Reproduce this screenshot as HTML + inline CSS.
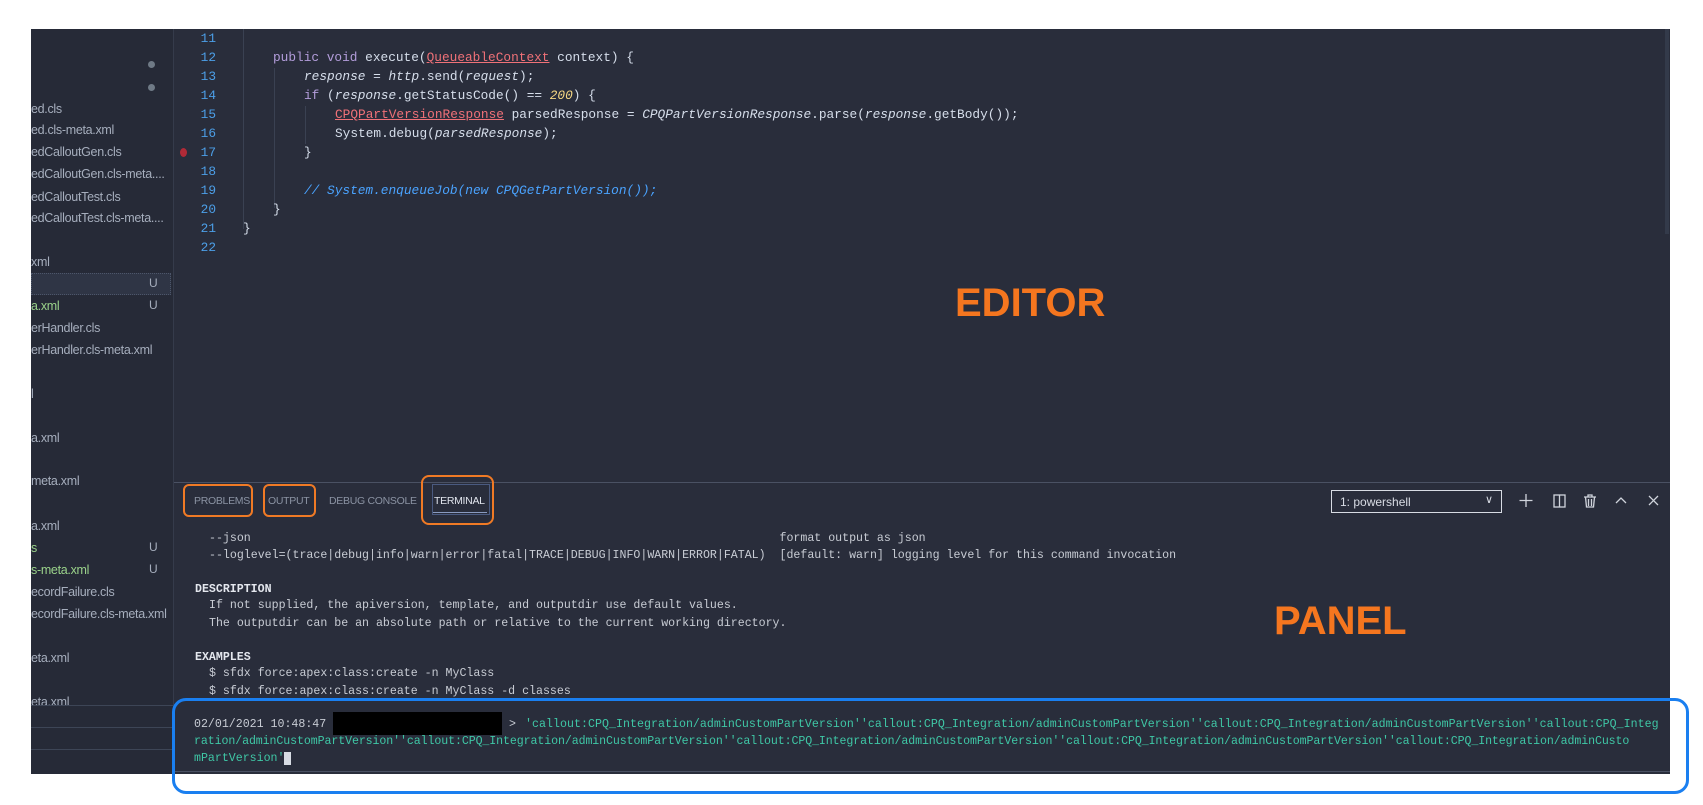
<!DOCTYPE html>
<html><head><meta charset="utf-8"><style>
*{margin:0;padding:0;box-sizing:border-box}
body{width:1703px;height:805px;background:#fff;position:relative;overflow:hidden;font-family:"Liberation Sans",sans-serif}
.abs{position:absolute;white-space:pre}
#app{position:absolute;left:31px;top:29px;width:1639px;height:745px;background:#292d3b}
#side{position:absolute;left:31px;top:29px;width:143px;height:745px;background:#262a37;border-right:1px solid #353b4b;overflow:hidden}
.si{position:absolute;left:0;font-size:12.5px;color:#a6aebd;letter-spacing:-0.3px;line-height:16px}
.g{color:#9ad28a}
.u{position:absolute;left:118px;font-size:12px;color:#a6aebd}
.ln{position:absolute;left:190px;width:26px;text-align:right;font-family:"Liberation Mono",monospace;font-size:12.8px;color:#4c9fe8;line-height:16px}
.cd{position:absolute;font-family:"Liberation Mono",monospace;font-size:12.8px;color:#d6deeb;white-space:pre;line-height:16px}
.kw{color:#b39ddb}.ty{color:#f07178;text-decoration:underline;text-decoration-color:#f07178}.it{font-style:italic}.num{color:#f7d883;font-style:italic}.cm{color:#4aa3ff;font-style:italic}
.t{position:absolute;font-family:"Liberation Mono",monospace;font-size:11.6px;color:#c8ccd4;white-space:pre;line-height:15px}
.gr{color:#3fc7a6}
.tab{position:absolute;top:495px;font-size:10.5px;color:#8b93a3;letter-spacing:-0.3px}
.ob{position:absolute;border:2px solid #f07a25;border-radius:6px}
.lbl{position:absolute;color:#f5761f;font-weight:bold;font-family:"Liberation Sans",sans-serif}
</style></head><body>
<div id="app"></div>
<div id="side">
<div class="abs" style="left:117px;top:32px;width:7px;height:7px;border-radius:50%;background:#6f7a86"></div>
<div class="abs" style="left:117px;top:55px;width:7px;height:7px;border-radius:50%;background:#6f7a86"></div>
<div class="si" style="top:72px">ed.cls</div>
<div class="si" style="top:93px">ed.cls-meta.xml</div>
<div class="si" style="top:115px">edCalloutGen.cls</div>
<div class="si" style="top:137px">edCalloutGen.cls-meta....</div>
<div class="si" style="top:160px">edCalloutTest.cls</div>
<div class="si" style="top:181px">edCalloutTest.cls-meta....</div>
<div class="si" style="top:225px">xml</div>
<div class="abs" style="left:0;top:244px;width:140px;height:22px;background:#2f3545;border:1px dotted #4d566a"></div>
<div class="u" style="top:247px">U</div>
<div class="si g" style="top:269px">a.xml</div><div class="u" style="top:269px">U</div>
<div class="si" style="top:291px">erHandler.cls</div>
<div class="si" style="top:313px">erHandler.cls-meta.xml</div>
<div class="si" style="top:357px">l</div>
<div class="si" style="top:401px">a.xml</div>
<div class="si" style="top:444px">meta.xml</div>
<div class="si" style="top:489px">a.xml</div>
<div class="si g" style="top:511px">s</div><div class="u" style="top:511px">U</div>
<div class="si g" style="top:533px">s-meta.xml</div><div class="u" style="top:533px">U</div>
<div class="si" style="top:555px">ecordFailure.cls</div>
<div class="si" style="top:577px">ecordFailure.cls-meta.xml</div>
<div class="si" style="top:621px">eta.xml</div>
<div class="si" style="top:665px">eta.xml</div>
<div class="abs" style="left:0;top:676px;width:143px;height:69px;background:#262a37;border-top:1px solid #3d4556"></div>
<div class="abs" style="left:0;top:698px;width:143px;border-top:1px solid #3d4556"></div>
<div class="abs" style="left:0;top:720px;width:143px;border-top:1px solid #3d4556"></div>
</div>
<div class="abs" style="left:1665px;top:29px;width:4px;height:205px;background:#333a4a"></div>
<div class="abs" style="left:180px;top:148px;width:7px;height:9px;border-radius:50%;background:#b02a37"></div>
<div class="ln" style="top:31px">11</div>
<div class="ln" style="top:50px">12</div>
<div class="ln" style="top:69px">13</div>
<div class="ln" style="top:88px">14</div>
<div class="ln" style="top:107px">15</div>
<div class="ln" style="top:126px">16</div>
<div class="ln" style="top:145px">17</div>
<div class="ln" style="top:164px">18</div>
<div class="ln" style="top:183px">19</div>
<div class="ln" style="top:202px">20</div>
<div class="ln" style="top:221px">21</div>
<div class="ln" style="top:240px">22</div>
<div class="abs" style="left:243px;top:29px;width:1px;height:200px;background:#3a4152"></div>
<div class="abs" style="left:274px;top:68px;width:1px;height:140px;background:#3a4152"></div>
<div class="abs" style="left:305px;top:106px;width:1px;height:38px;background:#3a4152"></div>
<div class="cd" style="left:273px;top:50px"><span class="kw">public void</span> execute(<span class="ty">QueueableContext</span> context) {</div>
<div class="cd" style="left:304px;top:69px"><span class="it">response</span> = <span class="it">http</span>.send(<span class="it">request</span>);</div>
<div class="cd" style="left:304px;top:88px"><span class="kw">if</span> (<span class="it">response</span>.getStatusCode() == <span class="num">200</span>) {</div>
<div class="cd" style="left:335px;top:107px"><span class="ty">CPQPartVersionResponse</span> parsedResponse = <span class="it">CPQPartVersionResponse</span>.parse(<span class="it">response</span>.getBody());</div>
<div class="cd" style="left:335px;top:126px">System.debug(<span class="it">parsedResponse</span>);</div>
<div class="cd" style="left:304px;top:145px">}</div>
<div class="cd cm" style="left:304px;top:183px">// System.enqueueJob(new CPQGetPartVersion());</div>
<div class="cd" style="left:273px;top:202px">}</div>
<div class="cd" style="left:243px;top:221px">}</div>
<div class="lbl" style="left:955px;top:281px;font-size:40px">EDITOR</div>
<div class="abs" style="left:174px;top:482px;width:1496px;border-top:1px solid #4a5163"></div>
<div class="tab" style="left:194px">PROBLEMS</div>
<div class="tab" style="left:268px">OUTPUT</div>
<div class="tab" style="left:329px">DEBUG CONSOLE</div>
<div class="tab" style="left:434px;color:#e0e4ec">TERMINAL</div>
<div class="abs" style="left:433px;top:512px;width:54px;border-top:1px solid #8a9bc0"></div>
<div class="abs" style="left:432px;top:484px;width:58px;height:31px;border:1px solid #4a5a80"></div>
<div class="ob" style="left:183px;top:484px;width:70px;height:33px"></div>
<div class="ob" style="left:263px;top:484px;width:53px;height:33px"></div>
<div class="ob" style="left:421px;top:475px;width:73px;height:50px;border-radius:8px"></div>
<div class="abs" style="left:1331px;top:490px;width:171px;height:23px;border:1px solid #d8dce4;background:#292d3b;color:#d8dce4;font-size:12px;padding:4px 0 0 8px">1: powershell<span style="position:absolute;right:8px;top:2px;font-size:11px">&#x2228;</span></div>
<svg class="abs" style="left:1518px;top:493px" width="150" height="16" viewBox="0 0 150 16" fill="none" stroke="#d0d4dc" stroke-width="1.3">
<path d="M8 1v13M1.5 7.5h13"/>
<rect x="36" y="2" width="11" height="12"/><path d="M41.5 2v12"/>
<path d="M66 4h12M70 4V2h4v2M67.5 4l1 10h7l1-10M70.5 6v7M73.5 6v7"/>
<path d="M98 10l5-5 5 5"/>
<path d="M131 3l9 9M140 3l-9 9"/>
</svg>
<div class="t" style="left:209px;top:531px">--json                                                                            format output as json</div>
<div class="t" style="left:209px;top:548px">--loglevel=(trace|debug|info|warn|error|fatal|TRACE|DEBUG|INFO|WARN|ERROR|FATAL)  [default: warn] logging level for this command invocation</div>
<div class="t" style="left:195px;top:582px;font-weight:bold;color:#e4e7ee">DESCRIPTION</div>
<div class="t" style="left:209px;top:598px">If not supplied, the apiversion, template, and outputdir use default values.</div>
<div class="t" style="left:209px;top:616px">The outputdir can be an absolute path or relative to the current working directory.</div>
<div class="t" style="left:195px;top:650px;font-weight:bold;color:#e4e7ee">EXAMPLES</div>
<div class="t" style="left:209px;top:666px">$ sfdx force:apex:class:create -n MyClass</div>
<div class="t" style="left:209px;top:684px">$ sfdx force:apex:class:create -n MyClass -d classes</div>
<div class="lbl" style="left:1274px;top:599px;font-size:40px">PANEL</div>
<div class="abs" style="left:174px;top:700px;width:1496px;height:74px;background:#292d3b"></div>
<div class="abs" style="left:174px;top:771px;width:1496px;border-top:1px solid #4a5163"></div>
<div class="t" style="left:194px;top:717px">02/01/2021 10:48:47</div>
<div class="abs" style="left:333px;top:712px;width:169px;height:23px;background:#000"></div>
<div class="t" style="left:509px;top:717px">&gt;</div>
<div class="t gr" style="left:525px;top:717px;letter-spacing:0.04px">'callout:CPQ_Integration/adminCustomPartVersion''callout:CPQ_Integration/adminCustomPartVersion''callout:CPQ_Integration/adminCustomPartVersion''callout:CPQ_Integ</div>
<div class="t gr" style="left:194px;top:734px;letter-spacing:-0.09px">ration/adminCustomPartVersion''callout:CPQ_Integration/adminCustomPartVersion''callout:CPQ_Integration/adminCustomPartVersion''callout:CPQ_Integration/adminCustomPartVersion''callout:CPQ_Integration/adminCusto</div>
<div class="t gr" style="left:194px;top:751px">mPartVersion'<span style="background:#d8dce4">&nbsp;</span></div>
<div class="abs" style="left:172px;top:698px;width:1517px;height:96px;border:3px solid #1a7ff0;border-radius:14px"></div>
</body></html>
